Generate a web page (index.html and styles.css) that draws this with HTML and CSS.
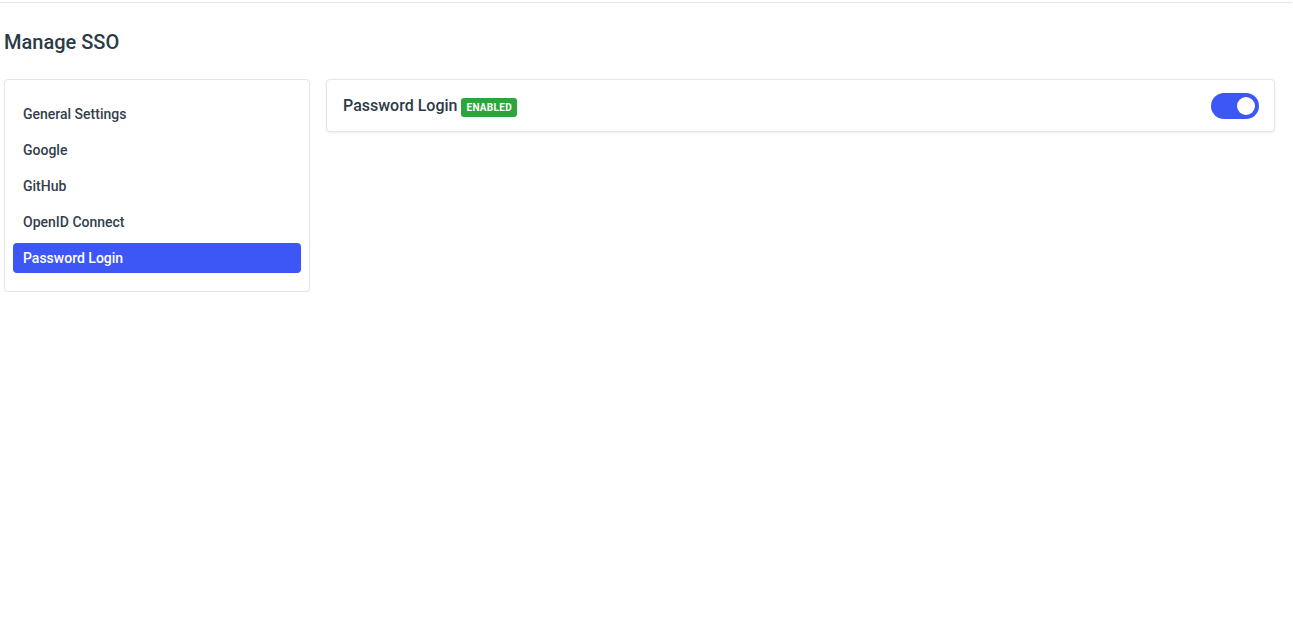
FILE: index.html
```html
<!DOCTYPE html>
<html>
<head>
<meta charset="utf-8">
<link rel="stylesheet" href="styles.css">
</head>
<body>
<div class="topline"></div>
<div class="page">
  <h1 class="title">Manage SSO</h1>
  <div class="layout">
    <div class="card sidebar">
      <div class="nav-item">General Settings</div>
      <div class="nav-item">Google</div>
      <div class="nav-item">GitHub</div>
      <div class="nav-item">OpenID Connect</div>
      <div class="nav-item active">Password Login</div>
    </div>
    <div class="card panel">
      <div class="panel-title">
        <span>Password Login</span>
        <span class="badge">ENABLED</span>
      </div>
      <div class="toggle"><div class="knob"></div></div>
    </div>
  </div>
</div>
</body>
</html>
```

FILE: styles.css
```css
html, body {
  margin: 0;
  padding: 0;
  background: #fff;
  font-family: Roboto, "Liberation Sans", sans-serif;
  color: #2c3a47;
}
.topline {
  height: 2px;
  border-bottom: 1px solid #e3e5e8;
  width: 1292px;
}
.page {
  padding: 0 18px 0 4px;
}
.title {
  margin: 0;
  padding-top: 28px;
  font-size: 20px;
  font-weight: 500;
  line-height: 22px;
  color: #2c3a47;
}
.layout {
  display: flex;
  align-items: flex-start;
  gap: 16px;
  margin-top: 26px;
}
.card {
  background: #fff;
  border: 1px solid #e3e5e8;
  border-radius: 4px;
  box-sizing: border-box;
}
.sidebar {
  width: 306px;
  flex: none;
  padding: 19px 8px 18px 8px;
  display: flex;
  flex-direction: column;
  gap: 6px;
  box-shadow: 0 1px 2px rgba(0,0,0,0.04);
}
.nav-item {
  height: 30px;
  line-height: 30px;
  padding-left: 10px;
  font-size: 14px;
  font-weight: 500;
  color: #34404c;
  border-radius: 4px;
}
.nav-item.active {
  background: #3d57f6;
  color: #fff;
}
.panel {
  flex: 1;
  height: 53px;
  display: flex;
  align-items: center;
  justify-content: space-between;
  padding: 0 15px 0 16px;
  box-shadow: 0 1px 3px rgba(0,0,0,0.08);
}
.panel-title {
  display: flex;
  align-items: center;
  gap: 4px;
  font-size: 16px;
  font-weight: 500;
  color: #2c3a47;
}
.badge {
  background: #2ea53a;
  color: #fff;
  font-size: 10px;
  font-weight: 700;
  letter-spacing: 0.3px;
  height: 19px;
  line-height: 19px;
  padding: 0 5px;
  border-radius: 3px;
  margin-top: 3px;
}
.toggle {
  width: 48px;
  height: 26px;
  border-radius: 13px;
  background: #3d57f6;
  display: flex;
  align-items: center;
  justify-content: flex-end;
  padding: 0 4px;
  box-sizing: border-box;
}
.knob {
  width: 18px;
  height: 18px;
  border-radius: 50%;
  background: #fff;
}
```
